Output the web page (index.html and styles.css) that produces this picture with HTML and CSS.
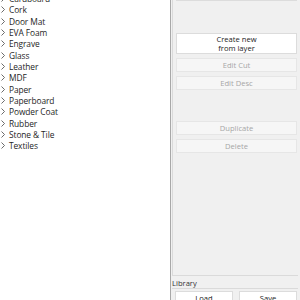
FILE: index.html
```html
<!DOCTYPE html>
<html>
<head>
<meta charset="utf-8">
<link rel="stylesheet" href="styles.css">
</head>
<body>
<div class="app">
  <div class="tree">
    <div class="row"><svg class="chev" width="4" height="7" viewBox="0 0 4 7"><polyline points="0.5,0.5 3.5,3.5 0.5,6.5"/></svg><span>Cardboard</span></div>
    <div class="row"><svg class="chev" width="4" height="7" viewBox="0 0 4 7"><polyline points="0.5,0.5 3.5,3.5 0.5,6.5"/></svg><span>Cork</span></div>
    <div class="row"><svg class="chev" width="4" height="7" viewBox="0 0 4 7"><polyline points="0.5,0.5 3.5,3.5 0.5,6.5"/></svg><span>Door Mat</span></div>
    <div class="row"><svg class="chev" width="4" height="7" viewBox="0 0 4 7"><polyline points="0.5,0.5 3.5,3.5 0.5,6.5"/></svg><span>EVA Foam</span></div>
    <div class="row"><svg class="chev" width="4" height="7" viewBox="0 0 4 7"><polyline points="0.5,0.5 3.5,3.5 0.5,6.5"/></svg><span>Engrave</span></div>
    <div class="row"><svg class="chev" width="4" height="7" viewBox="0 0 4 7"><polyline points="0.5,0.5 3.5,3.5 0.5,6.5"/></svg><span>Glass</span></div>
    <div class="row"><svg class="chev" width="4" height="7" viewBox="0 0 4 7"><polyline points="0.5,0.5 3.5,3.5 0.5,6.5"/></svg><span>Leather</span></div>
    <div class="row"><svg class="chev" width="4" height="7" viewBox="0 0 4 7"><polyline points="0.5,0.5 3.5,3.5 0.5,6.5"/></svg><span>MDF</span></div>
    <div class="row"><svg class="chev" width="4" height="7" viewBox="0 0 4 7"><polyline points="0.5,0.5 3.5,3.5 0.5,6.5"/></svg><span>Paper</span></div>
    <div class="row"><svg class="chev" width="4" height="7" viewBox="0 0 4 7"><polyline points="0.5,0.5 3.5,3.5 0.5,6.5"/></svg><span>Paperboard</span></div>
    <div class="row"><svg class="chev" width="4" height="7" viewBox="0 0 4 7"><polyline points="0.5,0.5 3.5,3.5 0.5,6.5"/></svg><span>Powder Coat</span></div>
    <div class="row"><svg class="chev" width="4" height="7" viewBox="0 0 4 7"><polyline points="0.5,0.5 3.5,3.5 0.5,6.5"/></svg><span>Rubber</span></div>
    <div class="row"><svg class="chev" width="4" height="7" viewBox="0 0 4 7"><polyline points="0.5,0.5 3.5,3.5 0.5,6.5"/></svg><span>Stone &amp; Tile</span></div>
    <div class="row"><svg class="chev" width="4" height="7" viewBox="0 0 4 7"><polyline points="0.5,0.5 3.5,3.5 0.5,6.5"/></svg><span>Textiles</span></div>
  </div>
  <div class="panel">
    <div class="group">
      <div class="btn top"></div>
      <div class="btn create">Create new<br>from layer</div>
      <div class="btn dis gap4">Edit Cut</div>
      <div class="btn dis gap4">Edit Desc</div>
      <div class="btn dis gap31">Duplicate</div>
      <div class="btn dis gap4">Delete</div>
    </div>
    <div class="lib-label">Library</div>
    <div class="lib">
      <div class="btn lb">Load</div>
      <div class="btn lb">Save</div>
    </div>
  </div>
</div>
</body>
</html>
```

FILE: styles.css
```css
html, body {
  margin: 0;
  padding: 0;
  width: 300px;
  height: 300px;
  overflow: hidden;
  background: #ffffff;
  font-family: "Open Sans", "Noto Sans", sans-serif;
}
.app {
  display: flex;
  width: 300px;
  height: 300px;
}
.tree {
  width: 170px;
  flex: none;
  background: #ffffff;
  margin-top: -7px;
}
.row {
  display: flex;
  align-items: center;
  height: 11.33px;
  font-size: 8.4px;
  letter-spacing: -0.1px;
  color: #1e1e1e;
  padding-left: 1px;
  white-space: nowrap;
}
.chev {
  flex: none;
  margin-right: 4px;
  fill: none;
  stroke: #5a5a5a;
  stroke-width: 0.9;
}
.panel {
  flex: 1;
  background: #f0f0f0;
  border-left: 1px solid #a8a8a8;
  display: flex;
  flex-direction: column;
  padding-left: 1px;
  overflow: hidden;
}
.group {
  flex: 1;
  display: flex;
  flex-direction: column;
  border-left: 1px solid #dadada;
  border-bottom: 1px solid #dadada;
  margin-right: 2px;
  padding: 0 1px 0 3px;
}
.btn {
  box-sizing: border-box;
  border: 1px solid #dcdcdc;
  background: #fdfdfd;
  text-align: center;
  font-size: 7.6px;
  color: #222222;
}
.top {
  flex: none;
  height: 12px;
  margin-top: -11px;
}
.create {
  flex: none;
  margin-top: 32px;
  height: 21px;
  line-height: 9px;
  padding-top: 1px;
  background: #ffffff;
}
.dis {
  flex: none;
  height: 14px;
  line-height: 12px;
  background: #f6f6f6;
  border-color: #e6e6e6;
  color: #a6a6a6;
}
.gap4 { margin-top: 4px; }
.gap31 { margin-top: 31px; }
.lib-label {
  flex: none;
  font-size: 7.6px;
  color: #333333;
  height: 12px;
  line-height: 15px;
}
.lib {
  flex: none;
  display: flex;
  gap: 6px;
  border-top: 1px solid #dadada;
  margin-right: 2px;
  padding: 2px 1px 0 3px;
  height: 9px;
}
.lb {
  flex: 1;
  height: 14px;
  line-height: 12px;
  background: #ffffff;
}
```
